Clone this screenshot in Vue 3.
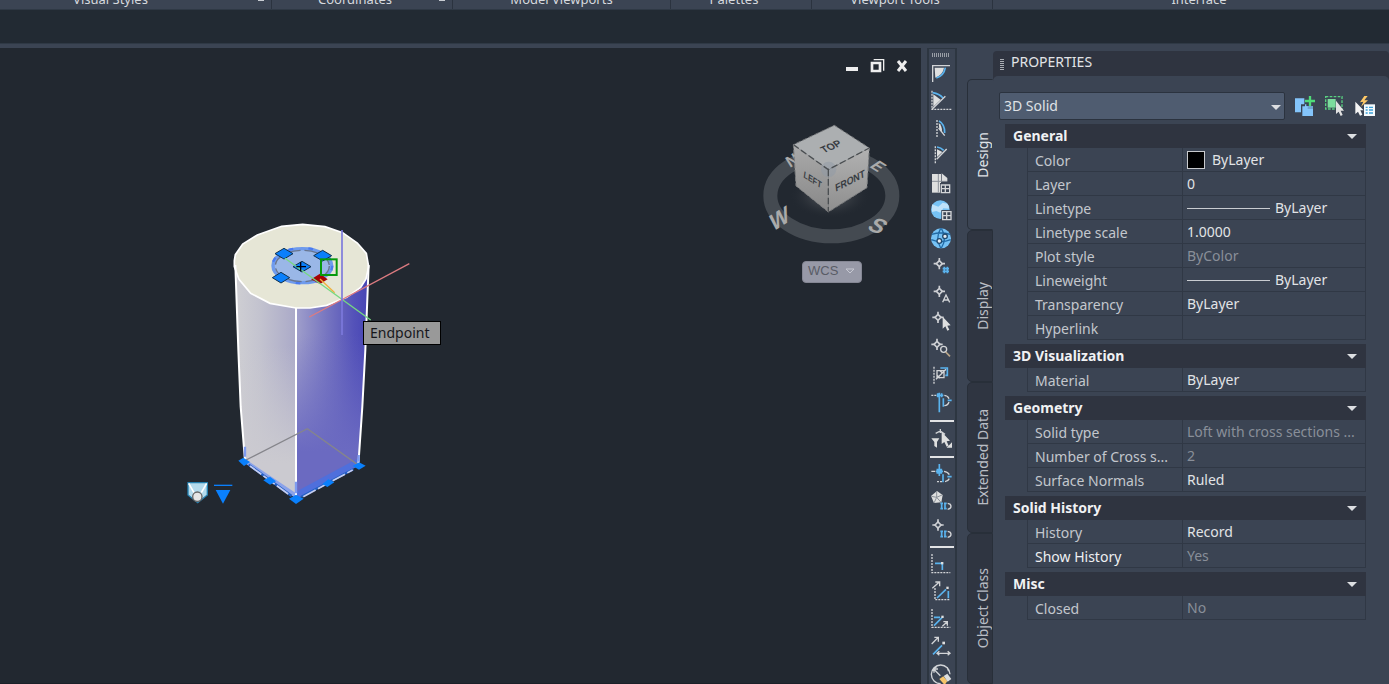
<script setup>
import { reactive, ref } from 'vue'

const ribbon = [
  { name: 'Visual Styles', cls: 'visual', more: true },
  { name: 'Coordinates', cls: 'coords', more: true },
  { name: 'Model Viewports', cls: 'model' },
  { name: 'Palettes', cls: 'palettes' },
  { name: 'Viewport Tools', cls: 'tools' },
  { name: 'Interface', cls: 'interface' },
]

const tabs = ['Design', 'Display', 'Extended Data', 'Object Class']
const activeTab = ref('Design')

const sections = reactive([
  {
    title: 'General',
    open: true,
    rows: [
      { name: 'Color', value: 'ByLayer', kind: 'swatch' },
      { name: 'Layer', value: '0' },
      { name: 'Linetype', value: 'ByLayer', kind: 'line' },
      { name: 'Linetype scale', value: '1.0000' },
      { name: 'Plot style', value: 'ByColor', muted: true },
      { name: 'Lineweight', value: 'ByLayer', kind: 'line' },
      { name: 'Transparency', value: 'ByLayer' },
      { name: 'Hyperlink', value: '' },
    ],
  },
  { title: '3D Visualization', open: true, rows: [{ name: 'Material', value: 'ByLayer' }] },
  {
    title: 'Geometry',
    open: true,
    rows: [
      { name: 'Solid type', value: 'Loft with cross sections ...', muted: true },
      { name: 'Number of Cross s...', value: '2', muted: true },
      { name: 'Surface Normals', value: 'Ruled' },
    ],
  },
  {
    title: 'Solid History',
    open: true,
    rows: [
      { name: 'History', value: 'Record' },
      { name: 'Show History', value: 'Yes', muted: true, strong: true },
    ],
  },
  { title: 'Misc', open: true, rows: [{ name: 'Closed', value: 'No', muted: true }] },
])

// Shape shorthands: w = light stroke, b = blue stroke, d = dashed light stroke,
// W = light fill, B = blue fill, k = dark stroke, y = yellow fill
const target = (x, y) => [
  ['t', `M${x - 9} ${y}L${x} ${y - 9}L${x + 9} ${y}L${x} ${y + 9}Z`],
  ['t', `M${x} ${y - 17}V${y - 9}M${x} ${y + 9}V${y + 17}M${x - 17} ${y}H${x - 9}M${x + 9} ${y}H${x + 17}`],
]
const curve = (x, y) => [
  ['b', `M${x} ${y}h8M${x + 11} ${y}h8M${x} ${y + 16}h8M${x + 11} ${y + 16}h8M${x + 4} ${y}v16M${x + 14} ${y}v16`],
  ['w', `M${x + 22} ${y}q10 1 10 9q0 8 -10 9`],
]
const groups = [
  [
    { label: 'UCS', cy: 84, s: [['w', 'M38 111V62H90'], ['W', 'M44 68H72Q70 88 46 98Z'], ['b', 'M76 68Q72 92 49 99']] },
    { label: 'UCS Object', cy: 167, s: [['d', 'M36 139V195H95'], ['W', 'M40 150L62 166L40 187Z'], ['b', 'M38 145Q58 148 69 161'], ['w', 'M36 195L76 156']] },
    { label: 'UCS Face', cy: 249, s: [['d', 'M51 225V277'], ['W', 'M56 234Q66 240 66 260L58 252Z'], ['b', 'M57 228Q75 238 74 264'], ['w', 'M56 249L74 272']] },
    { label: 'UCS View', cy: 332, s: [['d', 'M46 306V360'], ['b', 'M51 308Q63 310 71 318'], ['W', 'M51 315L67 323L51 338Z'], ['w', 'M50 345L80 314']] },
    { label: 'Sheet Views', cy: 414, s: [['W', 'M36 387H63V443H36Z'], ['W', 'M65 385L82 399V408H65Z'], ['k', 'M36 409H82M55 387V442'], ['F', 'M60 414H93V448H60Z'], ['w', 'M64 420H89V443H64ZM64 431H89M76 420V443']] },
    { label: 'Geographic View', cy: 497, s: [['B', 'M89 496A28 28 0 1 1 33 496A28 28 0 1 1 89 496Z'], ['D', 'M36 480L55 487L68 475L82 478Q88 485 87 493L70 492L61 505L49 500L36 503Z'], ['F', 'M64 497H98V531H64Z'], ['w', 'M68 502H93V526H68ZM68 514H93M80 502V526']] },
    { label: 'World', cy: 579, s: [['B', 'M93 580A30 30 0 1 1 33 580A30 30 0 1 1 93 580Z'], ['n', 'M35 568Q62 560 91 568M34 584Q63 596 92 584M62 550Q45 580 62 609M64 550Q83 580 64 609'], ['C', 'M68 574a7 7 0 1 1 14 0a7 7 0 1 1 -14 0ZM51 588a7 7 0 1 1 14 0a7 7 0 1 1 -14 0Z']] },
    { label: 'Snap Grid', cy: 47, s: [...target(58, 43), ['b', 'M68 58H87M68 66H87M73 52V72M82 52V72']] },
    { label: 'Snap Annotation', cy: 129, s: [...target(58, 124), ['w', 'M68 157L78 135L89 157M72 150H85']] },
    { label: 'Snap Select', cy: 212, s: [...target(54, 204), ['W', 'M68 202V238L76 231L82 244L88 241L82 229L92 228Z']] },
    { label: 'Snap Inspect', cy: 294, s: [...target(51, 283), ['w', 'M80 298A9 9 0 1 1 62 298A9 9 0 1 1 80 298Z'], ['o', 'M77 306L90 319']] },
    { label: 'Clip Plane', cy: 377, s: [['d', 'M42 352V404'], ['w', 'M51 364H72V385H51ZM48 390L78 360M51 378L60 387M60 364L68 372'], ['b', 'M61 356H82V378H76']] },
    { label: 'Tangent', cy: 459, s: [['d', 'M34 436H50'], ['b', 'M50 436H70M53 430V442M65 430V442M58 428V487M70 445V470M83 451H95'], ['w', 'M73 436Q84 437 87 446M87 456Q84 466 73 467']] },
  ],
  [
    { label: 'Filter Select', cy: 570, s: [['w', 'M47 553L61 546L75 556M61 540V552'], ['W', 'M34 568H58L51 579V596L43 591V579Z'], ['W', 'M65 549V585L73 579L80 593L86 590L80 577L90 575Z'], ['W', 'M80 596L96 580V596Z']] },
  ],
  [
    { label: 'Midpoint', cy: 42, s: [['w', 'M34 34H46M72 34Q84 36 88 44M88 56Q84 64 75 65'], ['b', 'M48 34H69M58 12V48M52 29H64V39H52ZM69 43V67M82 50H95'], ['d', 'M51 65H68']] },
    { label: 'Polygon Curve', cy: 124, s: [['W', 'M51 94L68 106L64 128L42 130L33 109Z'], ['k', 'M50 94V113L34 110M50 113L66 106M50 113L63 128M50 113L42 130'], ...curve(61, 131)] },
    { label: 'Target Curve', cy: 207, s: [...target(54, 195), ...curve(61, 214)] },
  ],
  [
    { label: 'Origin', cy: 309, s: [['d', 'M36 279V335H91'], ['b', 'M45 307H67V327'], ['W', 'M63 303H70V310H63Z']] },
    { label: 'Z Axis', cy: 391, s: [['d', 'M45 382V417H88'], ['w', 'M37 383L58 364M46 364H59V377'], ['b', 'M51 412L78 386M85 391V413'], ['W', 'M79 378H86V385H79Z']] },
    { label: '3 Point', cy: 474, s: [['d', 'M36 444V499H91'], ['b', 'M42 469H60M42 494L66 470'], ['W', 'M64 464H71V471H64Z'], ['w', 'M67 496L82 482M70 482H82V494']] },
    { label: 'X Axis', cy: 556, s: [['w', 'M35 550L55 530M43 530H55V543M51 578H90M58 572L51 578L58 584M83 572L90 578L83 584'], ['b', 'M39 581L66 554'], ['W', 'M67 543H75V551H67Z']] },
    { label: 'Apply', cy: 639, s: [['w', 'M90 640A28 28 0 1 0 62 668M61 644L41 624M42 635V624H54M81 619L86 631M51 616L42 622'], ['y', 'M58 654L70 646L82 660L74 672Z'], ['W', 'M71 645L82 638L94 654L83 662Z']] },
  ],
]
</script>

<template>
  <div class="app">
    <header class="ribbon">
      <div v-for="p in ribbon" :key="p.name" class="ribbon-panel" :class="p.cls">
        <span>{{ p.name }}</span>
        <i v-if="p.more" class="more"></i>
      </div>
    </header>
    <div class="file-bar"></div>

    <main class="workspace">
      <section class="viewport" aria-label="Model viewport">
        <svg class="solid" width="290" height="300" viewBox="0 0 870 900">
          <defs>
            <linearGradient id="leftFace" x1="0" x2="1" y1="0" y2="0">
              <stop offset="0" stop-color="#cfcfd3" />
              <stop offset=".4" stop-color="#c3c3cf" />
              <stop offset="1" stop-color="#aaa9c8" />
            </linearGradient>
            <linearGradient id="rightFace" x1="0" x2="1" y1="0" y2="0">
              <stop offset="0" stop-color="#a09fcb" />
              <stop offset=".45" stop-color="#7473c0" />
              <stop offset=".8" stop-color="#5452b9" />
              <stop offset="1" stop-color="#4745b5" />
            </linearGradient>
            <linearGradient id="leftLow" x1="0" x2="0" y1="0" y2="1">
              <stop offset=".35" stop-color="#cbcad0" stop-opacity="0" />
              <stop offset=".85" stop-color="#cbcad0" />
            </linearGradient>
            <linearGradient id="rightLow" x1="0" x2="0" y1="0" y2="1">
              <stop offset=".3" stop-color="#6b6ac1" stop-opacity="0" />
              <stop offset=".8" stop-color="#6b6ac1" />
            </linearGradient>
          </defs>
          <path d="M197 160L205 420L212 590L225 752L378 865V200Z" fill="url(#leftFace)" />
          <path d="M197 160L205 420L212 590L225 752L378 865V200Z" fill="url(#leftLow)" />
          <path d="M595 160L587 420L577 590L565 765L378 865V200Z" fill="url(#rightFace)" />
          <path d="M595 160L587 420L577 590L565 765L378 865V200Z" fill="url(#rightLow)" />
          <path d="M378 845L565 745V768L378 868Z" fill="#4f6fdc" />
          <path d="M230 750L378 850V865L225 760Z" fill="#8aa2ea" />
          <path d="M193 170V152L196 134L218 102L262 75L335 49L398 43L465 50L518 68L562 99L589 130L596 170L588 207L572 232L530 262L470 286L420 294H378L300 280L242 250L207 208Z" fill="#e6e6d6" stroke="#fff" stroke-width="5" />
          <path d="M196 165L205 420L212 590L225 752M596 165L586 420L577 590L565 765M378 294V860" fill="none" stroke="#fff" stroke-width="6" />
          <path d="M228 750L412 656L563 764" fill="none" stroke="#85858b" stroke-width="4" />
          <ellipse cx="397" cy="167" rx="88" ry="51" fill="#9ab7e7" stroke="#6f9bed" stroke-width="10" />
          <ellipse cx="397" cy="168" rx="81" ry="47" fill="none" stroke="#68758e" stroke-width="4" stroke-dasharray="40 12" />
          <ellipse cx="397" cy="167" rx="90" ry="53" fill="none" stroke="#4a7bf0" stroke-width="7" stroke-dasharray="14 46" />
          <g fill="#0a7ffb" stroke="#10304d" stroke-width="3">
            <path d="M315 131L342 115L369 131L342 147Z" />
            <path d="M431 137L458 121L485 137L458 153Z" />
            <path d="M369 170L396 154L423 170L396 186Z" />
            <path d="M307 203L333 187L359 203L333 219Z" />
          </g>
          <path d="M423 208L450 191L473 208L450 222Z" fill="#a50505" />
          <path d="M450 207L494 248" stroke="#eeb13c" stroke-width="4" />
          <path d="M345 145L602 330" stroke="#76d981" stroke-width="4" />
          <path d="M418 321L718 161" stroke="#dd7b80" stroke-width="4" />
          <path d="M516 60V375" stroke="#7c79dc" stroke-width="5" />
          <path d="M379 170H408M392 156V184" stroke="#001" stroke-width="4" />
          <rect x="453" y="148" width="47" height="47" fill="none" stroke="#07990d" stroke-width="6" />
          <path d="M236 764L365 858M394 860L550 778" stroke="#2560c5" stroke-width="7" />
          <path d="M240 768L360 856M400 860L548 780" stroke="#c5cdf0" stroke-width="5" stroke-dasharray="42 8" />
          <path d="M225 710V740M378 815V850M566 735V755" stroke="#7e9bf0" stroke-width="7" />
          <g fill="#0a80fc">
            <path d="M205 752L220 743L240 756L222 768Z" />
            <path d="M280 811L300 800L318 814L300 824Z" />
            <path d="M357 866L378 854L401 866L378 882Z" />
            <path d="M457 822L475 808L493 817L472 831Z" />
            <path d="M548 768L567 757L587 767L567 779Z" />
          </g>
          <path d="M54 818H112V855L83 878L54 855Z" fill="#b4dbed" stroke="#257fae" stroke-width="4" />
          <path d="M56 820L72 848M110 820L94 848" stroke="#fff" stroke-width="5" />
          <circle cx="82" cy="860" r="14" fill="#e6e6e6" stroke="#666" stroke-width="4" />
          <path d="M132 826H187" stroke="#0a7ffb" stroke-width="4" />
          <path d="M137 840H181L159 881Z" fill="#0a80fc" />
        </svg>
        <div class="snap-tip">Endpoint</div>

        <div class="window-controls">
          <button aria-label="Minimize"><svg width="16" height="16"><path d="M2 9H14V13H2Z" fill="#eee" /></svg></button>
          <button aria-label="Restore"><svg width="16" height="16" viewBox="0 0 48 48" fill="none" stroke="#eee"><path d="M14 5H44V38" stroke-width="4" /><path d="M9 15H33V39H9Z" stroke-width="8" /></svg></button>
          <button aria-label="Close"><svg width="16" height="16"><path d="M4 3L12 13M12 3L4 13" stroke="#eee" stroke-width="3" /></svg></button>
        </div>

        <svg class="view-cube" width="150" height="130" viewBox="60 210 450 390">
          <defs>
            <linearGradient id="cubeL" x1="0" x2="0" y1="0" y2="1"><stop offset="0" stop-color="#aaa" /><stop offset="1" stop-color="#888" /></linearGradient>
            <linearGradient id="cubeR" x1="0" x2="0" y1="0" y2="1"><stop offset="0" stop-color="#b2b2b2" /><stop offset="1" stop-color="#8e8e8e" /></linearGradient>
            <radialGradient id="glow"><stop offset="0" stop-color="#66696d" /><stop offset="1" stop-color="#222830" stop-opacity="0" /></radialGradient>
          </defs>
          <ellipse cx="274" cy="437" rx="183" ry="122" fill="none" stroke="#444a51" stroke-width="42" />
          <ellipse cx="270" cy="438" rx="122" ry="68" fill="url(#glow)" />
          <g class="compass" fill="#aaa">
            <text transform="translate(150 354) rotate(-32)">N</text>
            <text transform="translate(386 350) rotate(32) skewX(-24)">E</text>
            <text class="near" transform="translate(98 545) rotate(-32) skewX(-18)">W</text>
            <text class="near" transform="translate(378 536) rotate(24) skewX(-18)">S</text>
          </g>
          <path d="M283 226L388 294L265 359L160 284Z" fill="#acafb1" />
          <path d="M160 284L265 359V486L168 408Z" fill="url(#cubeL)" />
          <path d="M265 359L388 294L381 413L265 486Z" fill="url(#cubeR)" />
          <circle cx="266" cy="358" r="23" fill="#8f9aa5" opacity=".5" />
          <path d="M160 284L265 359L388 294M265 359V486" fill="none" stroke="#4b4f52" stroke-width="4" stroke-dasharray="20 8" />
          <path d="M283 226L388 294L381 413L265 486L168 408L160 284Z" fill="none" stroke="#77797b" stroke-width="3" stroke-dasharray="14 6" />
          <g class="faces" fill="#393d43">
            <text class="top" transform="translate(252 310) rotate(-24) skewX(16)">TOP</text>
            <text class="left" transform="translate(190 382) rotate(32) skewX(24)">LEFT</text>
            <text transform="translate(287 425) rotate(-27) skewX(-20)">FRONT</text>
          </g>
        </svg>
        <button class="wcs">WCS <svg width="10" height="6" viewBox="0 0 10 6"><path d="M1 1H9L5 5Z" fill="none" stroke="#c6c8d2" /></svg></button>
      </section>

      <nav class="toolbar" aria-label="UCS tools">
        <i class="grip-h"></i>
        <div v-for="(g, gi) in groups" :key="gi" class="tool-group">
          <button v-for="t in g" :key="t.label" :aria-label="t.label">
            <svg width="24" height="28" :viewBox="`30 ${t.cy - 42} 72 84`">
              <path v-for="(s, i) in t.s" :key="i" :class="'i-' + s[0]" :d="s[1]" />
            </svg>
          </button>
        </div>
      </nav>

      <aside class="palette">
        <div class="tabs" role="tablist">
          <button
            v-for="t in tabs"
            :key="t"
            role="tab"
            :aria-selected="activeTab === t"
            :class="{ active: activeTab === t }"
            @click="activeTab = t"
          ><span>{{ t }}</span></button>
        </div>
        <div class="panel">
          <h1><i class="grip-v"></i>PROPERTIES</h1>
          <div class="panel-body">
            <div class="selection">
              <div class="combo">
                <select aria-label="Object type"><option>3D Solid</option></select>
                <i class="arrow"></i>
              </div>
              <button aria-label="Toggle PICKADD">
                <svg width="22" height="22" viewBox="912 150 66 66"><path d="M915 160H943V178H933V202H915Z" fill="#84c5fb" /><path d="M937 184H953V190H969V213H937Z" fill="#84c5fb" /><path d="M947 178V186H969" fill="none" stroke="#84c5fb" stroke-width="4" /><path d="M960 153V183M945 168H975" stroke="#4fdc78" stroke-width="7" /></svg>
              </button>
              <button aria-label="Select objects">
                <svg width="22" height="22" viewBox="1002 150 66 66"><path d="M1007 155H1056V192H1007Z" fill="none" stroke="#58d080" stroke-width="4" stroke-dasharray="8 4" /><path d="M1013 162H1037V188H1013Z" fill="#7bdc9c" /><path d="M1038 167V207L1046 200L1052 213L1058 210L1052 197H1062Z" fill="#e2e2e2" /></svg>
              </button>
              <button aria-label="Quick select">
                <svg width="22" height="22" viewBox="1092 150 66 66"><path d="M1096 170V207L1104 200L1110 212L1117 209L1111 196H1121Z" fill="#f4f4f4" /><path d="M1123 153L1110 172L1120 170L1113 185L1134 166H1123L1133 153Z" fill="#ffc966" /><path d="M1122 178H1155V213H1122Z" fill="#f5fafc" /><path d="M1127 187H1133M1137 187H1149M1127 195H1133M1137 195H1149M1127 204H1133M1137 204H1149" stroke="#3ba1d8" stroke-width="4" /></svg>
              </button>
            </div>

            <div class="sections">
              <section v-for="s in sections" :key="s.title">
                <h2>
                  <button :aria-expanded="s.open" @click="s.open = !s.open">{{ s.title }}<i class="arrow"></i></button>
                </h2>
                <table v-if="s.open">
                  <tbody>
                    <tr v-for="r in s.rows" :key="r.name">
                      <th scope="row" :class="{ strong: r.strong }">{{ r.name }}</th>
                      <td :class="{ muted: r.muted }">
                        <div class="value">
                          <i v-if="r.kind" :class="r.kind"></i>{{ r.value }}
                        </div>
                      </td>
                    </tr>
                  </tbody>
                </table>
              </section>
            </div>
          </div>
        </div>
      </aside>
    </main>
  </div>
</template>

<style>
body {
  background: #3b4453;
}
</style>

<style scoped>
.app {
  display: flex;
  flex-direction: column;
  height: 100vh;
  overflow: hidden;
  background: #3b4453;
  color: #d6d9de;
  font: 14px/20px "Noto Sans", "Open Sans", sans-serif;
}
* {
  box-sizing: border-box;
}
button {
  padding: 0;
  border: 0;
  background: none;
  color: inherit;
  font: inherit;
}
svg {
  display: block;
}

.ribbon {
  display: grid;
  grid-template-columns: 272fr 181fr 218fr 141fr 181fr 396fr;
  flex: none;
  height: 10px;
  border-bottom: 1px solid #2f3945;
  overflow: hidden;
  font-size: 13px;
}
.ribbon-panel {
  position: relative;
  display: flex;
  align-items: flex-end;
  justify-content: center;
  min-width: 0;
  height: 9px;
  border-right: 1px solid #2b333f;
  white-space: nowrap;
}
.ribbon-panel:last-child {
  border-right: 0;
}
.visual { padding-right: 50px; }
.coords,
.palettes,
.tools { padding-right: 14px; }
.interface { padding-left: 16px; }
.more {
  position: absolute;
  right: 7px;
  top: 0;
  width: 6px;
  height: 1px;
  background: #c9cdd3;
}

.file-bar {
  flex: none;
  height: 34px;
  background: #222a33;
  border-bottom: 1px solid #2f3945;
}

.workspace {
  display: flex;
  flex: 1;
  min-height: 0;
  padding-top: 4px;
}

.viewport {
  position: relative;
  flex: 1;
  min-width: 0;
  background: #222830;
  border-bottom: 1px solid #1b2028;
  overflow: hidden;
}
.solid {
  position: absolute;
  left: 170px;
  top: 162px;
}
.snap-tip {
  position: absolute;
  left: 363px;
  top: 273px;
  padding: 1px 11px 1px 6px;
  border: 1px solid #000;
  background: #999;
  color: #17171c;
}
.window-controls {
  position: absolute;
  top: 10px;
  right: 11px;
  display: flex;
  gap: 9px;
}
.view-cube {
  position: absolute;
  top: 72px;
  right: 11px;
}
.compass text {
  font: bold 48px "Liberation Sans", sans-serif;
}
.compass .near {
  font-size: 66px;
}
.faces text {
  font: bold 29px "Liberation Sans", sans-serif;
}
.faces .top {
  font-size: 30px;
}
.faces .left {
  font-size: 25px;
}
.wcs {
  position: absolute;
  top: 213px;
  right: 59px;
  display: flex;
  align-items: center;
  justify-content: space-between;
  width: 60px;
  height: 22px;
  padding: 0 6px 2px 5px;
  border: 1px solid #858794;
  border-radius: 4px;
  background: #9799a7;
  color: #595c66;
  font: 13px/18px "Liberation Sans", sans-serif;
}

.toolbar {
  flex: none;
  width: 30px;
  margin: 0 10px 0 6px;
  padding-top: 4px;
  border: solid #2d3641;
  border-width: 1px 2px 0;
}
.grip-h {
  display: block;
  width: 17px;
  height: 4px;
  margin: 0 0 2px 3px;
  background: repeating-linear-gradient(90deg, #999ea6 0 1px, transparent 1px 2px);
}
.tool-group button {
  display: block;
  width: 24px;
  height: 27px;
  margin-left: 1px;
}
.tool-group button:nth-child(even) {
  height: 28px;
}
.tool-group + .tool-group {
  margin-top: 4px;
}
.tool-group + .tool-group::before {
  content: "";
  display: block;
  height: 2px;
  margin: 0 1px 2px;
  background: #e2e3e5;
}
.tool-group:nth-of-type(2)::before {
  margin-bottom: 3px;
}
.toolbar path {
  fill: none;
  stroke-width: 4;
}
.toolbar .i-w { stroke: #d2d4d7; }
.toolbar .i-t { stroke: #ced0d4; stroke-width: 5; }
.toolbar .i-b { stroke: #5ab3ee; stroke-width: 5; }
.toolbar .i-n { stroke: #226aa5; }
.toolbar .i-k { stroke: #8b9199; stroke-width: 3; }
.toolbar .i-o { stroke: #bba689; stroke-width: 5; }
.toolbar .i-d { stroke: #d2d4d7; stroke-dasharray: 6 3; }
.toolbar .i-W { fill: #dedfdf; }
.toolbar .i-B { fill: #76c2f5; }
.toolbar .i-D { fill: #bfe2fa; }
.toolbar .i-F { fill: #3b4453; }
.toolbar .i-C { fill: #e4eaf0; stroke: #214b70; }
.toolbar .i-y { fill: #f6c46a; }

.palette {
  display: flex;
  flex: none;
  width: 422px;
  padding-top: 3px;
}
.tabs {
  display: flex;
  flex: none;
  flex-direction: column;
  width: 26px;
  padding-top: 28px;
}
.tabs button {
  display: flex;
  flex: 1;
  align-items: center;
  justify-content: center;
  padding-left: 5px;
  border: 1px solid #282f39;
  border-radius: 5px 0 0 5px;
  background: #2f3541;
  color: #b9bdc4;
}
.tabs .active {
  border-right-color: transparent;
  background: #3b4453;
  color: #dfe2e6;
}
.tabs span {
  writing-mode: vertical-rl;
  transform: rotate(180deg);
  white-space: nowrap;
}
.panel {
  flex: 1;
  min-width: 0;
  background: #2f3440;
  border-radius: 4px 4px 0 0;
}
h1 {
  display: flex;
  align-items: center;
  gap: 7px;
  height: 25px;
  margin: 0;
  padding: 0 0 3px 7px;
  color: #e2e4e7;
  font-size: 14px;
  font-weight: 400;
}
.grip-v {
  width: 4px;
  height: 12px;
  margin-top: 5px;
  background: repeating-linear-gradient(#a9adb3 0 1px, transparent 1px 2px);
}
.panel-body {
  height: calc(100% - 25px);
  padding: 16px 13px 0 6px;
  border-radius: 5px 5px 0 0;
  background: #3b4453;
}
.selection {
  display: flex;
  align-items: center;
}
.selection button {
  margin-left: 8px;
}
.combo {
  position: relative;
  flex: 1;
  margin-right: 1px;
}
.combo select {
  display: block;
  width: 100%;
  height: 28px;
  padding: 0 24px 0 4px;
  border: 1px solid #2b333f;
  border-radius: 2px;
  appearance: none;
  background: #4f5c70;
  color: #dfe2e6;
  font: inherit;
}
.arrow {
  width: 0;
  height: 0;
  border: 5px solid transparent;
  border-top-color: #dcdee1;
  border-bottom: 0;
}
.combo .arrow {
  position: absolute;
  right: 4px;
  top: 13px;
  pointer-events: none;
}
.sections {
  display: flex;
  flex-direction: column;
  gap: 4px;
  margin: 4px 10px 0 6px;
}
h2 {
  margin: 0;
  font-size: 14px;
}
h2 button {
  display: flex;
  align-items: center;
  justify-content: space-between;
  width: 100%;
  height: 24px;
  padding: 0 9px 0 8px;
  background: #2f3440;
  color: #f0f1f3;
  font-weight: 700;
}
table {
  width: calc(100% - 22px);
  margin-left: 22px;
  border-collapse: separate;
  border-spacing: 0;
  border-left: 1px solid #303845;
  table-layout: fixed;
}
th,
td {
  height: 24px;
  padding: 0;
  border-bottom: 1px solid #303845;
  border-right: 1px solid #303845;
  white-space: nowrap;
  text-align: left;
  font-weight: 400;
}
th {
  width: 155px;
  padding: 3px 0 0 7px;
  color: #c3c7cd;
}
th.strong {
  color: #eef0f2;
}
td {
  padding: 1px 0 0 4px;
  color: #e1e3e6;
}
td.muted {
  color: #898f99;
}
.value {
  display: flex;
  align-items: center;
}
.swatch {
  width: 18px;
  height: 18px;
  margin-right: 7px;
  border: 1px solid #c9cbce;
  background: #000;
}
.line {
  width: 83px;
  height: 1px;
  margin-right: 5px;
  background: #c9ccd1;
}
</style>
